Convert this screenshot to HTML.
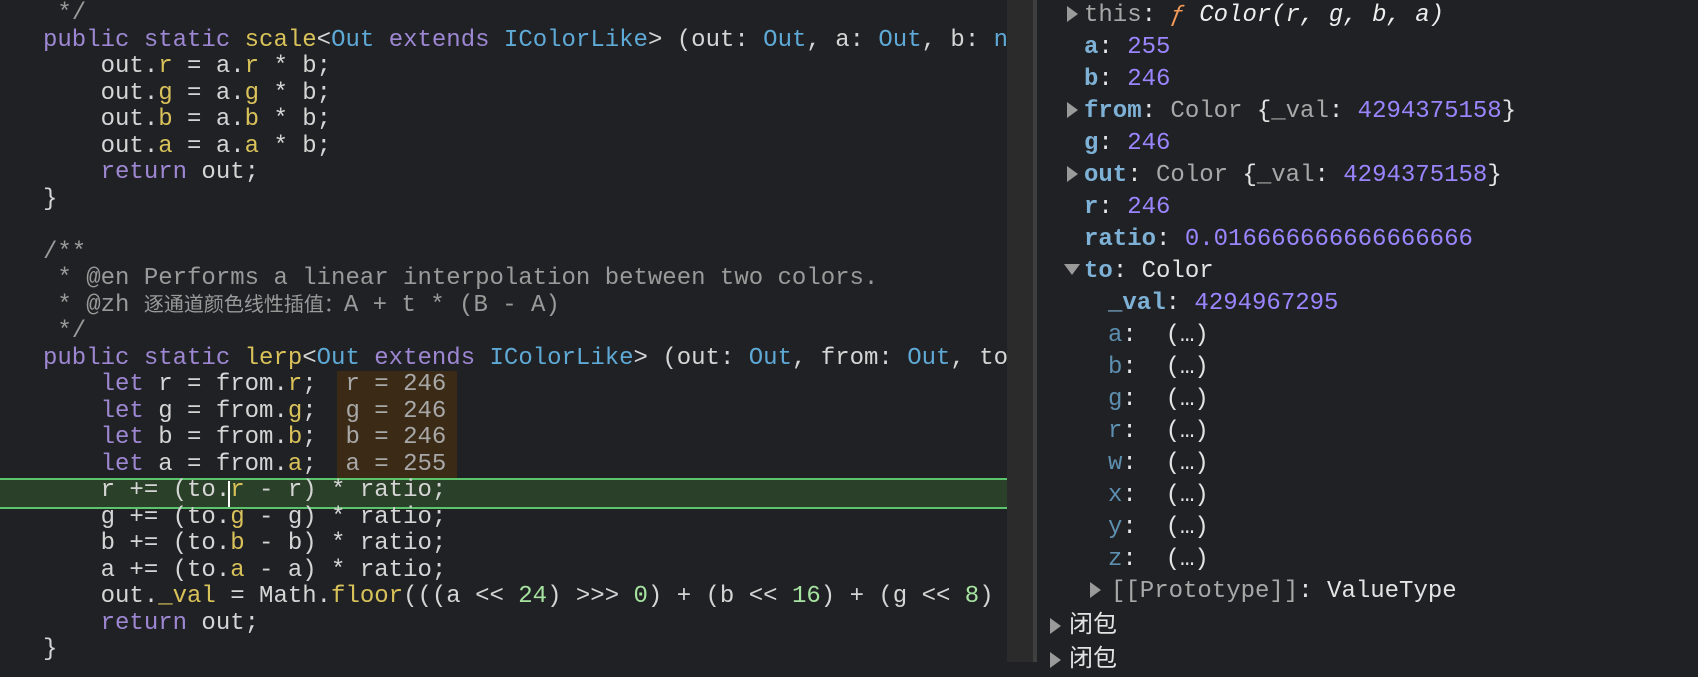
<!DOCTYPE html>
<html><head><meta charset="utf-8"><style>
html,body{margin:0;padding:0;background:#202124;width:1698px;height:662px;overflow:hidden}
.code{position:absolute;left:0;top:0;width:1007px;height:662px;overflow:hidden;background:#202124}
pre{margin:0;position:absolute;left:43px;top:1px;font:24px/26.5px "Liberation Mono","Noto Sans CJK SC",monospace;color:#d5d5d5;white-space:pre}
.k{color:#9d87d2}.f{color:#d9c25a}.t{color:#5ea9d6}.c{color:#9a9a9a}.n{color:#a6e3a1}.p{color:#d9c25a}
.cj{font-size:20px;line-height:20px;font-family:"Noto Sans CJK SC",sans-serif}
.hl{position:absolute;left:0;top:478px;width:1007px;height:27px;background:#2a4028;border-top:2px solid #5cc46c;border-bottom:2px solid #5cc46c}
.box{position:absolute;left:337px;top:371px;width:120px;height:107px;background:#3a2a16}
.cur{position:absolute;left:228px;top:481px;width:2px;height:26px;background:#fff}
.div1{position:absolute;left:1007px;top:0;width:26px;height:662px;background:#2b2b2c}
.div2{position:absolute;left:1033px;top:0;width:4px;height:662px;background:#3f3f40}
.rp{position:absolute;left:1037px;top:0;right:0;height:662px;background:#202124}
.row{position:absolute;height:32px;line-height:32px;font:24px/32px "Liberation Mono","Noto Sans CJK SC",monospace;color:#e3e3e3;white-space:pre}
.tri{position:absolute;width:0;height:0;border-top:8px solid transparent;border-bottom:8px solid transparent;border-left:11px solid #9a9a9a}
.tri.d{border-left:8px solid transparent;border-right:8px solid transparent;border-top:11px solid #9a9a9a;border-bottom:0}
.key{color:#7eb1d6;font-weight:bold}.v{color:#9b85ff}.g{color:#a8a8a8}.sk{color:#5d8fb0}
.fi{color:#f29a5a;font-style:italic}.it{font-style:italic;color:#eee}
</style></head><body>
<div class="code">
<div class="box"></div>
<div class="hl"></div>
<pre><span class="c"> */</span>
<span class="k">public static</span> <span class="f">scale</span>&lt;<span class="t">Out</span> <span class="k">extends</span> <span class="t">IColorLike</span>&gt; (out: <span class="t">Out</span>, a: <span class="t">Out</span>, b: <span class="t">number</span>) {
    out.<span class="p">r</span> = a.<span class="p">r</span> * b;
    out.<span class="p">g</span> = a.<span class="p">g</span> * b;
    out.<span class="p">b</span> = a.<span class="p">b</span> * b;
    out.<span class="p">a</span> = a.<span class="p">a</span> * b;
    <span class="k">return</span> out;
}

<span class="c">/**</span>
<span class="c"> * @en Performs a linear interpolation between two colors.</span>
<span class="c"> * @zh <span class="cj">逐通道颜色线性插值：</span>A + t * (B - A)</span>
<span class="c"> */</span>
<span class="k">public static</span> <span class="f">lerp</span>&lt;<span class="t">Out</span> <span class="k">extends</span> <span class="t">IColorLike</span>&gt; (out: <span class="t">Out</span>, from: <span class="t">Out</span>, to: <span class="t">Out</span>, ratio: <span class="t">number</span>) {
    <span class="k">let</span> r = from.<span class="p">r</span>;  <span class="g">r = 246</span>
    <span class="k">let</span> g = from.<span class="p">g</span>;  <span class="g">g = 246</span>
    <span class="k">let</span> b = from.<span class="p">b</span>;  <span class="g">b = 246</span>
    <span class="k">let</span> a = from.<span class="p">a</span>;  <span class="g">a = 255</span>
    r += (to.<span class="p">r</span> - r) * ratio;
    g += (to.<span class="p">g</span> - g) * ratio;
    b += (to.<span class="p">b</span> - b) * ratio;
    a += (to.<span class="p">a</span> - a) * ratio;
    out.<span class="p">_val</span> = Math.<span class="f">floor</span>(((a &lt;&lt; <span class="n">24</span>) &gt;&gt;&gt; <span class="n">0</span>) + (b &lt;&lt; <span class="n">16</span>) + (g &lt;&lt; <span class="n">8</span>) + r);
    <span class="k">return</span> out;
}</pre>
<div class="cur"></div>
</div>
<div class="div1"></div><div class="div2"></div>
<div class="rp"></div>

<div class="tri" style="left:1067px;top:6px"></div>
<div class="row" style="left:1084px;top:0px"><span class="g">this</span>: <span class="fi">ƒ</span> <span class="it">Color(r, g, b, a)</span></div>
<div class="row" style="left:1084px;top:32px"><span class="key">a</span>: <span class="v">255</span></div>
<div class="row" style="left:1084px;top:64px"><span class="key">b</span>: <span class="v">246</span></div>
<div class="tri" style="left:1067px;top:102px"></div>
<div class="row" style="left:1084px;top:96px"><span class="key">from</span>: <span class="g">Color</span> {<span class="g">_val</span>: <span class="v">4294375158</span>}</div>
<div class="row" style="left:1084px;top:128px"><span class="key">g</span>: <span class="v">246</span></div>
<div class="tri" style="left:1067px;top:166px"></div>
<div class="row" style="left:1084px;top:160px"><span class="key">out</span>: <span class="g">Color</span> {<span class="g">_val</span>: <span class="v">4294375158</span>}</div>
<div class="row" style="left:1084px;top:192px"><span class="key">r</span>: <span class="v">246</span></div>
<div class="row" style="left:1084px;top:224px"><span class="key">ratio</span>: <span class="v">0.016666666666666666</span></div>
<div class="tri d" style="left:1064px;top:264px"></div>
<div class="row" style="left:1084px;top:256px"><span class="key">to</span>: Color</div>
<div class="row" style="left:1108px;top:288px"><span class="key">_val</span>: <span class="v">4294967295</span></div>
<div class="row" style="left:1108px;top:320px"><span class="sk">a</span>:  (…)</div>
<div class="row" style="left:1108px;top:352px"><span class="sk">b</span>:  (…)</div>
<div class="row" style="left:1108px;top:384px"><span class="sk">g</span>:  (…)</div>
<div class="row" style="left:1108px;top:416px"><span class="sk">r</span>:  (…)</div>
<div class="row" style="left:1108px;top:448px"><span class="sk">w</span>:  (…)</div>
<div class="row" style="left:1108px;top:480px"><span class="sk">x</span>:  (…)</div>
<div class="row" style="left:1108px;top:512px"><span class="sk">y</span>:  (…)</div>
<div class="row" style="left:1108px;top:544px"><span class="sk">z</span>:  (…)</div>
<div class="tri" style="left:1090px;top:582px"></div>
<div class="row" style="left:1111px;top:576px"><span class="g">[[Prototype]]</span>: ValueType</div>
<div class="tri" style="left:1050px;top:618px"></div>
<div class="row" style="left:1069px;top:611px">闭包</div>
<div class="tri" style="left:1050px;top:652px"></div>
<div class="row" style="left:1069px;top:645px">闭包</div>
</body></html>
